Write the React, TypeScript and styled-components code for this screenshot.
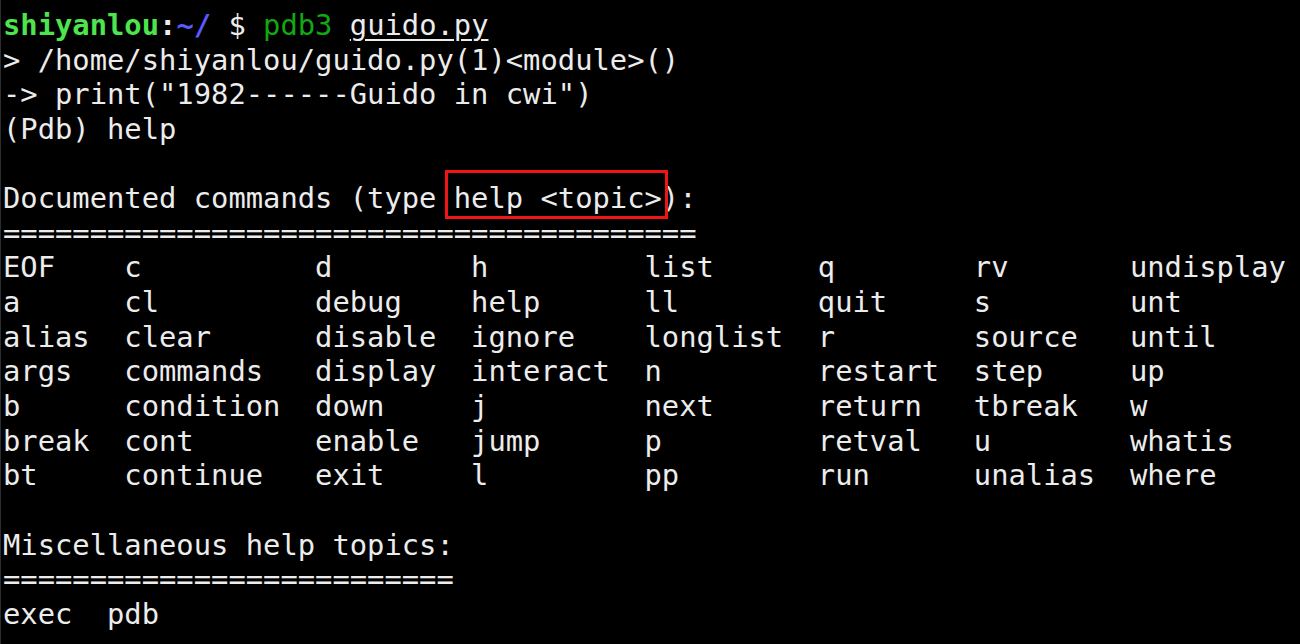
import React from "react";
import styled, { createGlobalStyle } from "styled-components";

const Global = createGlobalStyle`
  html, body { margin: 0; padding: 0; background: #000; }
  body { overflow: hidden; }
`;

const Terminal = styled.div`
  width: 1300px;
  height: 644px;
  box-sizing: border-box;
  background: #000;
  border-left: 1px solid #2e2e2e;
  padding: 8px 0 0 2px;
  font-family: "DejaVu Sans Mono", "Liberation Mono", monospace;
  font-size: 28.8px;
  line-height: 34.65px;
  color: #ececec;
  overflow: hidden;
`;

const Line = styled.div`
  white-space: pre;
  height: 34.65px;
`;

const Prompt = styled.span<{ $color: string; $bold?: boolean }>`
  color: ${(p) => p.$color};
  font-weight: ${(p) => (p.$bold ? 700 : 400)};
`;

const Underlined = styled.span`
  text-decoration: underline;
  text-underline-offset: 4px;
  text-decoration-thickness: 2px;
`;

const Highlight = styled.span`
  position: relative;
  display: inline-block;
  &::after {
    content: "";
    position: absolute;
    left: -9px;
    right: -6px;
    top: -11px;
    bottom: -3px;
    border: 3px solid #f01414;
  }
`;

const CommandGrid = styled.div`
  display: grid;
  grid-template-columns: 7ch 11ch 9ch 10ch 10ch 9ch 9ch auto;
  grid-auto-rows: 34.65px;
  white-space: pre;
`;

const MiscGrid = styled.div`
  display: grid;
  grid-template-columns: 6ch auto;
  grid-auto-rows: 34.65px;
  white-space: pre;
`;

const rows = [
  ["EOF", "c", "d", "h", "list", "q", "rv", "undisplay"],
  ["a", "cl", "debug", "help", "ll", "quit", "s", "unt"],
  ["alias", "clear", "disable", "ignore", "longlist", "r", "source", "until"],
  ["args", "commands", "display", "interact", "n", "restart", "step", "up"],
  ["b", "condition", "down", "j", "next", "return", "tbreak", "w"],
  ["break", "cont", "enable", "jump", "p", "retval", "u", "whatis"],
  ["bt", "continue", "exit", "l", "pp", "run", "unalias", "where"],
];

export default function App() {
  return (
    <>
      <Global />
      <Terminal>
        <Line>
          <Prompt $color="#4ee44e" $bold>shiyanlou</Prompt>
          <Prompt $color="#ececec" $bold>:</Prompt>
          <Prompt $color="#5a5aff" $bold>~/</Prompt>
          <Prompt $color="#ececec"> $ </Prompt>
          <Prompt $color="#12a812">pdb3</Prompt>{" "}
          <Underlined>guido.py</Underlined>
        </Line>
        <Line>{"> /home/shiyanlou/guido.py(1)<module>()"}</Line>
        <Line>{'-> print("1982------Guido in cwi")'}</Line>
        <Line>(Pdb) help</Line>
        <Line> </Line>
        <Line>
          {"Documented commands (type "}
          <Highlight>{"help <topic>"}</Highlight>
          {"):"}
        </Line>
        <Line>{"=".repeat(40)}</Line>
        <CommandGrid>
          {rows.flat().map((w, i) => (
            <span key={i}>{w}</span>
          ))}
        </CommandGrid>
        <Line> </Line>
        <Line>Miscellaneous help topics:</Line>
        <Line>{"=".repeat(26)}</Line>
        <MiscGrid>
          <span>exec</span>
          <span>pdb</span>
        </MiscGrid>
      </Terminal>
    </>
  );
}
